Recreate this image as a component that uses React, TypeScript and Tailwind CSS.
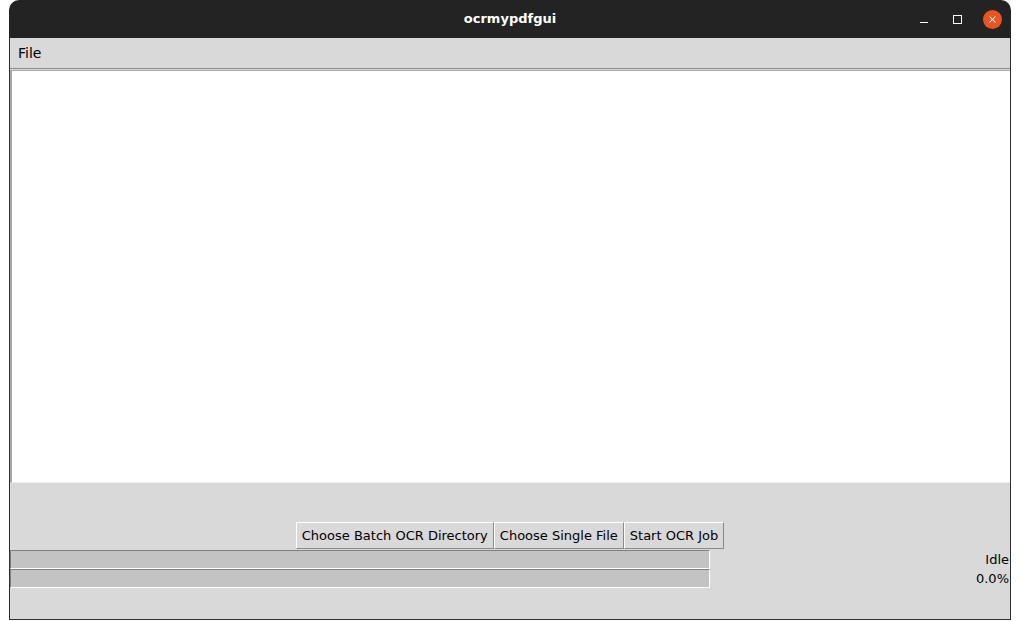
import { X } from 'lucide-react';

const font = { fontFamily: '"DejaVu Sans", Verdana, sans-serif' };

function TkButton({ label }: { label: string }) {
  return (
    <button
      className="h-[27px] px-[5px] bg-[#d9d9d9] text-[13px] text-black leading-none border border-t-white border-l-white border-b-[#8a8a8a] border-r-[#8a8a8a] whitespace-nowrap"
      style={font}
    >
      {label}
    </button>
  );
}

function ProgressRow({ text }: { text: string }) {
  return (
    <div className="flex items-center h-[19px]">
      <div className="w-[700px] h-[19px] bg-[#c3c3c3] border border-t-[#808080] border-l-[#808080] border-b-white border-r-white" />
      <div className="flex-1 text-right pr-[1px] text-[13px] text-black" style={font}>
        {text}
      </div>
    </div>
  );
}

export default function App() {
  return (
    <div className="w-[1020px] h-[621px] bg-white px-[9px] overflow-hidden">
      <div className="flex flex-col h-[620px] w-[1002px]">
        {/* Title bar */}
        <div className="relative flex items-center justify-center h-[38px] shrink-0 bg-[#232323] rounded-t-[10px]">
          <span className="text-white text-[13px] font-bold" style={font}>
            ocrmypdfgui
          </span>
          <div className="absolute right-[9px] top-0 h-full flex items-center">
            <div className="w-[8px] h-[1px] mt-[6px] bg-white" />
            <div className="w-[9px] h-[9px] border border-white ml-[25px]" />
            <div className="w-[19px] h-[19px] rounded-full bg-[#e95420] flex items-center justify-center ml-[21px]">
              <X className="text-white" size={11} strokeWidth={2.2} />
            </div>
          </div>
        </div>

        {/* Window body */}
        <div className="flex flex-col flex-1 bg-[#d9d9d9] border-x border-b border-[#2e2e2e]">
          {/* Menu bar */}
          <div className="h-[31px] shrink-0 flex items-center pl-[8px] border-b border-[#8c8c8c]">
            <span className="text-[14px] text-black" style={font}>
              File
            </span>
          </div>

          {/* Text area */}
          <div className="h-[413px] shrink-0 mt-[1px] bg-white border-l-2 border-t border-[#a8a8a8] border-b border-b-[#ececec]" />

          {/* Controls */}
          <div className="flex flex-col flex-1">
            <div className="flex justify-center mt-[39px]">
              <TkButton label="Choose Batch OCR Directory" />
              <TkButton label="Choose Single File" />
              <TkButton label="Start OCR Job" />
            </div>
            <div className="mt-[1px]">
              <ProgressRow text="Idle" />
              <ProgressRow text="0.0%" />
            </div>
          </div>
        </div>
      </div>
    </div>
  );
}
